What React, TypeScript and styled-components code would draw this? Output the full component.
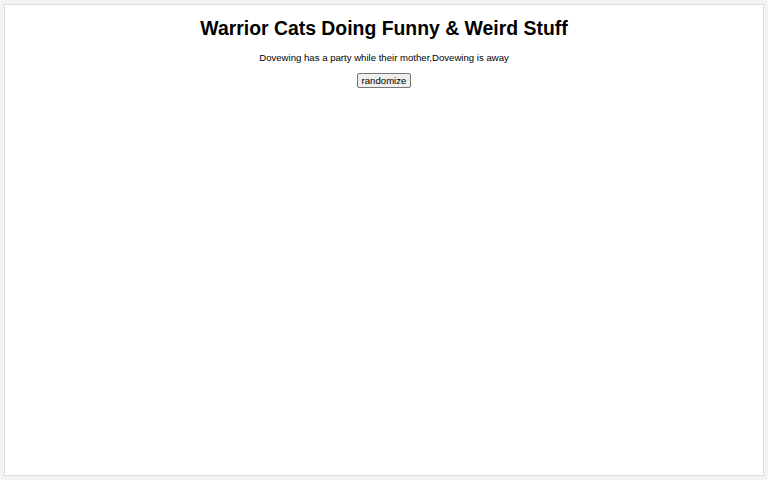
import React, {useState} from 'react'
import styled, {createGlobalStyle} from "styled-components"

const events = [
    "Dovewing has a party while their mother,Dovewing is away",
    "Firestar tries to teach Graystripe how to juggle mice",
    "Jayfeather eats a bee and regrets it",
    "Squirrelflight dyes her fur blue for no reason",
]

function App() {
    const [event, setEvent] = useState(events[0])

    const randomize = () => {
        setEvent(events[Math.floor(Math.random() * events.length)])
    }

    return (
        <>
            <GlobalStyle/>
            <Page>
                <Title>Warrior Cats Doing Funny &amp; Weird Stuff</Title>
                <Event>{event}</Event>
                <Randomize onClick={randomize}>randomize</Randomize>
            </Page>
        </>
    )
}

export default App

const GlobalStyle = createGlobalStyle`
    html, body {
        margin: 0;
        background: #f2f2f2;
        font-family: 'Liberation Sans', Arial, sans-serif;
    }
    body {
        padding: 4px;
        box-sizing: border-box;
        height: 480px;
    }
`

const Page = styled.div`
    background: #fff;
    border: 1px solid #dcdcdc;
    height: 472px;
    box-sizing: border-box;
    display: flex;
    flex-direction: column;
    align-items: center;
`

const Title = styled.h1`
    font-size: 19.4px;
    font-weight: bold;
    color: #000;
    margin: 12px 0 0;
`

const Event = styled.p`
    font-size: 9.6px;
    color: #000;
    margin: 12px 0 0;
`

const Randomize = styled.button`
    font-family: 'Liberation Sans', Arial, sans-serif;
    font-size: 9.6px;
    margin-top: 10px;
    padding: 1px 4px;
    background: #efefef;
    border: 1px solid #767676;
    border-radius: 2px;
    color: #000;
`
